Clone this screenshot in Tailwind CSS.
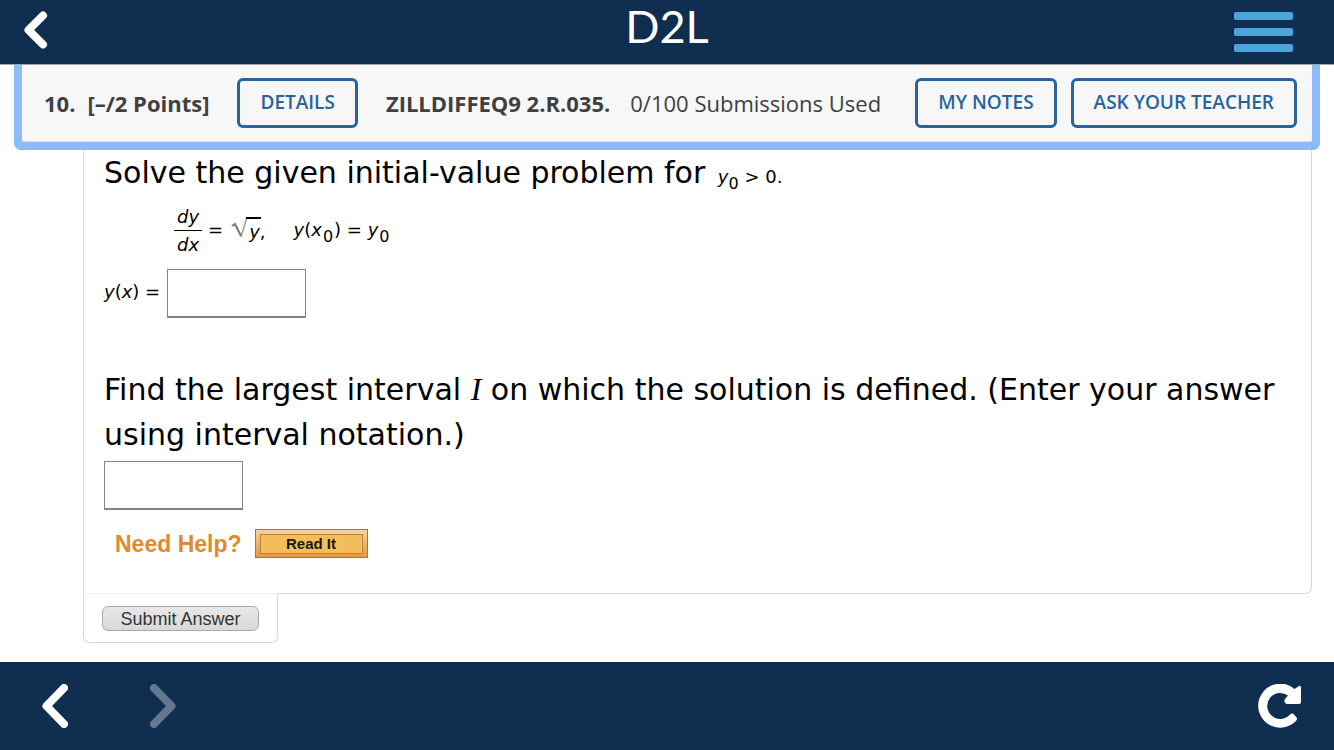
<!DOCTYPE html>
<html lang="en">
<head>
<meta charset="utf-8">
<meta name="viewport" content="width=device-width, initial-scale=1">
<title>D2L</title>
<script src="https://cdn.jsdelivr.net/npm/@tailwindcss/browser@4"></script>
</head>
<body class="flex min-h-screen flex-col bg-white font-['DejaVu_Sans',sans-serif] text-black">
  <header class="relative z-20 grid h-16 grid-cols-3 items-start bg-[#102e50] shadow-[0_1px_0_#a0a4a8]">
    <button type="button" aria-label="Back" class="ml-6 mt-[11px] justify-self-start">
      <svg class="block h-[38px] w-6" viewBox="0 0 24 38" fill="none" stroke="#fff" stroke-width="8" stroke-linecap="round" stroke-linejoin="round"><path d="M19 4.5 4.5 19 19 33.5"/></svg>
    </button>
    <h1 class="justify-self-center text-[45px] leading-[52px] font-normal text-white font-['Lato',sans-serif]">D2L</h1>
    <button type="button" aria-label="Menu" class="mr-[41px] mt-3 flex w-[59px] flex-col gap-2 justify-self-end">
      <span class="h-2 rounded-xs bg-[#4ba5dd]"></span>
      <span class="h-2 rounded-xs bg-[#4ba5dd]"></span>
      <span class="h-2 rounded-xs bg-[#4ba5dd]"></span>
    </button>
  </header>

  <main class="flex-1 px-[22px] pb-[19px]">
    <div class="relative z-10 flex h-[78px] items-center rounded-xs border-b border-[#dcdcdc] bg-[#f7f7f7] pl-[22px] pr-[15px] font-['Open_Sans',sans-serif] text-[22px] text-[#404040] shadow-[0_0_0_8px_#8dbaf9]">
      <h2 class="flex items-baseline gap-3 pt-[2px] font-bold"><span>10.</span><span>[–/2 Points]</span></h2>
      <button type="button" class="ml-7 h-[50px] rounded-md border-[3px] border-[#28649b] px-5 pb-px text-[19px] font-semibold text-[#28649b]">DETAILS</button>
      <strong class="ml-7 pt-[2px] font-bold">ZILLDIFFEQ9 2.R.035.</strong>
      <span class="ml-5 pt-[2px]">0/100 Submissions Used</span>
      <div class="ml-auto flex gap-[14px]">
        <button type="button" class="h-[50px] rounded-md border-[3px] border-[#28649b] px-5 pb-px text-[19px] font-semibold text-[#28649b]">MY NOTES</button>
        <button type="button" class="h-[50px] rounded-md border-[3px] border-[#28649b] px-5 pb-px text-[19px] font-semibold text-[#28649b]">ASK YOUR TEACHER</button>
      </div>
    </div>

    <form class="ml-[61px]">
      <div class="rounded-br-md border-x border-b border-[#d8d8d8] pb-[35px] pl-5 pt-2">
        <p class="text-[30px] leading-[45px]">Solve the given initial-value problem for <span class="ml-[3px] text-lg leading-none"><i>y</i><sub class="static align-[-6px] text-base leading-none">0</sub> &gt; 0.</span></p>

        <div class="ml-[70px] mt-2 flex h-14 items-center text-lg">
          <span class="flex flex-col text-center leading-[27px] italic"><span class="border-b border-black px-[3px] leading-[26px]">dy</span><span>dx</span></span>
          <span class="ml-[6px] -mt-[2px]">=</span>
          <svg class="ml-2 h-6 w-[30px] -mt-1" viewBox="0 0 30 24" fill="none" stroke="#000"><path d="M1 9l3-2 6 12" stroke="#777" stroke-width="2"/><path d="M10 20 16 0" stroke="#999" stroke-width="1.5"/><path d="M15 1h15" stroke-width="2"/></svg>
          <span class="-ml-3 mt-[2px]"><i>y</i>,</span>
          <span class="ml-7 -mt-[2px] leading-7"><i>y</i>(<i>x</i><sub class="static mx-px align-[-6px] text-base leading-none">0</sub>) = <i>y</i><sub class="static ml-px align-[-6px] text-base leading-none">0</sub></span>
        </div>

        <div class="mt-[10px] flex h-[49px] items-center text-lg">
          <label for="solution" class="whitespace-nowrap pb-[3px]"><i>y</i>(<i>x</i>) =</label>
          <input id="solution" type="text" class="ml-[7px] h-[49px] w-[139px] border border-b-2 border-[#858585] bg-white px-2">
        </div>

        <label for="interval" class="mt-[49px] block text-[30px] leading-[45px]">Find the largest interval <i class="font-['Liberation_Serif',serif] text-[32px] leading-none">I</i> on which the solution is defined. (Enter your answer using interval notation.)</label>
        <input id="interval" type="text" class="mt-1 block h-[49px] w-[139px] border border-b-2 border-[#858585] bg-white px-2 text-lg">

        <div class="mt-[19px] flex items-center pl-[11px] font-['Liberation_Sans',Arial,sans-serif] font-bold">
          <span class="text-[23px] leading-7 text-[#e08a2e]">Need Help?</span>
          <button type="button" class="ml-[13px] h-[29px] w-[113px] border border-[#a8743a] bg-linear-to-b from-[#f6d3a8] via-[#efb066] to-[#e9983f] p-1 text-[15px] leading-[18px] text-[#1c1606]"><span class="block border border-[#b98538] bg-[#f3bd5b]">Read It</span></button>
        </div>
      </div>

      <div class="-mt-px w-[195px] rounded-b-md border border-[#d8d8d8] border-t-[#f3f3f3] bg-white pb-[11px] pl-[18px] pt-3">
        <button type="submit" class="block h-[25px] w-[157px] rounded-md border border-[#aaa] bg-linear-to-b from-[#e8e8e8] to-[#d8d8d8] font-['Liberation_Sans',Arial,sans-serif] text-lg leading-none text-[#333]">Submit Answer</button>
      </div>
    </form>
  </main>

  <footer class="flex h-[88px] items-center bg-[#102e50]">
    <button type="button" aria-label="Previous page" class="ml-[42px]">
      <svg class="block h-11 w-[26px]" viewBox="0 0 26 44" fill="none" stroke="#fff" stroke-width="8" stroke-linecap="round" stroke-linejoin="round"><path d="M22 4 4.500 22 22 40"/></svg>
    </button>
    <button type="button" aria-label="Next page" disabled class="ml-[82px]">
      <svg class="block h-11 w-[26px]" viewBox="0 0 26 44" fill="none" stroke="#63788f" stroke-width="8" stroke-linecap="round" stroke-linejoin="round"><path d="M4 4 21.500 22 4 40"/></svg>
    </button>
    <button type="button" aria-label="Reload" class="ml-auto mr-8">
      <svg class="block h-11 w-11" viewBox="0 0 44 44" fill="#fff"><path d="M36.500 5 41 2Q43 1 43 4V18Q43 20 41 20H29Q25 19 27 15L30 11.500A13 13 0 1 0 31 31.500Q34 28 36.500 31L38.500 33.500Q40 35 37.500 37.500A22 22 0 1 1 36.500 5Z"/></svg>
    </button>
  </footer>
</body>
</html>
